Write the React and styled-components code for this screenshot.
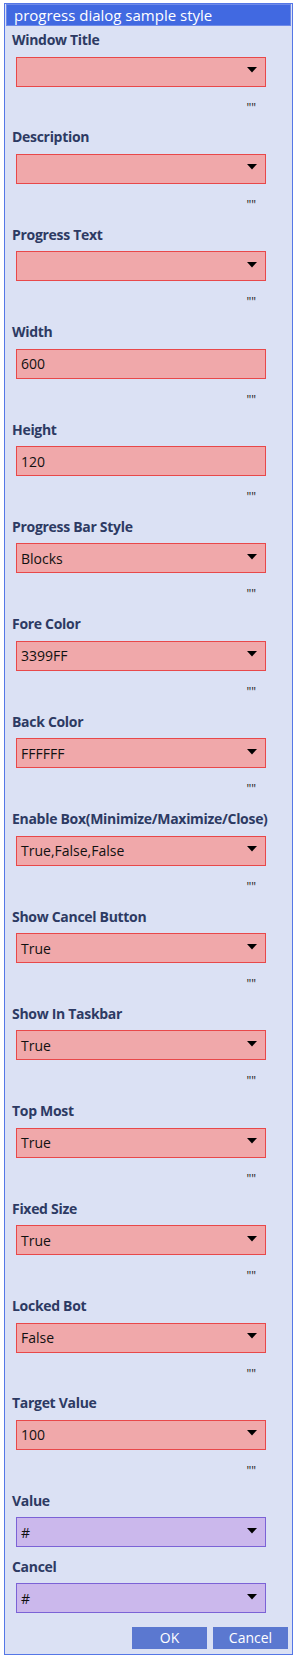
import React from "react";
import styled, { createGlobalStyle } from "styled-components";

const GlobalStyle = createGlobalStyle`
  html, body {
    margin: 0;
    padding: 0;
    background: #fff;
  }
  body {
    font-family: "Open Sans", "Noto Sans", sans-serif;
  }
`;

const Dialog = styled.div`
  margin: 3px 0 0 4px;
  width: 287px;
  border: 1px solid #5577e6;
  background: #dbe1f4;
  display: flex;
  flex-direction: column;
`;

const TitleBar = styled.div`
  margin: 0 1px;
  height: 20px;
  border: 1px solid #6f8ae8;
  background: #4169e1;
  color: #fff;
  font-size: 15px;
  line-height: 20px;
  padding-left: 7px;
  white-space: nowrap;
`;

const Body = styled.div`
  padding: 4px 4px 5px 7px;
  display: flex;
  flex-direction: column;
`;

const Field = styled.div`
  height: ${(p) => (p.$hint ? "97.4px" : "66px")};
  display: flex;
  flex-direction: column;
`;

const Label = styled.div`
  font-size: 14px;
  line-height: 20px;
  font-weight: 700;
  color: #2d3a63;
  white-space: nowrap;
  letter-spacing: -0.3px;
`;

const Select = styled.div`
  margin: 6.5px 0 0 4px;
  width: 250px;
  height: 30px;
  box-sizing: border-box;
  border: 1px solid ${(p) => (p.$kind === "var" ? "#7b62d6" : "#e8484a")};
  background: ${(p) => (p.$kind === "var" ? "#cbb8ec" : "#f0a8aa")};
  display: flex;
  align-items: center;
  padding: 0 8px 0 4px;
  font-size: 14px;
  color: #111;
`;

const Value = styled.span`
  flex: 1;
  white-space: nowrap;
`;

const Arrow = styled.svg`
  width: 10px;
  height: 6px;
  margin-top: -3px;
`;

const Hint = styled.div`
  margin-top: 14px;
  width: 244px;
  text-align: right;
  font-size: 12px;
  line-height: 14px;
  color: #222;
`;

const Buttons = styled.div`
  margin-top: 14px;
  display: flex;
  justify-content: flex-end;
  gap: 6px;
`;

const Button = styled.button`
  width: 75px;
  height: 22px;
  border: none;
  background: #5b78d0;
  color: #fff;
  font-family: "Open Sans", "Noto Sans", sans-serif;
  font-size: 14px;
  line-height: 22px;
  padding: 0;
`;

const fields = [
  ["Window Title", ""],
  ["Description", ""],
  ["Progress Text", ""],
  ["Width", "600", "input"],
  ["Height", "120", "input"],
  ["Progress Bar Style", "Blocks"],
  ["Fore Color", "3399FF"],
  ["Back Color", "FFFFFF"],
  ["Enable Box(Minimize/Maximize/Close)", "True,False,False"],
  ["Show Cancel Button", "True"],
  ["Show In Taskbar", "True"],
  ["Top Most", "True"],
  ["Fixed Size", "True"],
  ["Locked Bot", "False"],
  ["Target Value", "100"],
];

const vars = [
  ["Value", "#"],
  ["Cancel", "#"],
];

const DropArrow = () => (
  <Arrow viewBox="0 0 10 6">
    <path d="M0 0 H10 L5 5.5 Z" fill="#000" />
  </Arrow>
);

const App = () => {
  return (
    <>
      <GlobalStyle />
      <Dialog>
        <TitleBar>progress dialog sample style</TitleBar>
        <Body>
          {fields.map(([label, value, type]) => (
            <Field key={label} $hint>
              <Label>{label}</Label>
              <Select>
                <Value>{value}</Value>
                {type !== "input" && <DropArrow />}
              </Select>
              <Hint>""</Hint>
            </Field>
          ))}
          {vars.map(([label, value], i) => (
            <Field key={label} style={i === vars.length - 1 ? { height: "auto" } : undefined}>
              <Label>{label}</Label>
              <Select $kind="var">
                <Value>{value}</Value>
                <DropArrow />
              </Select>
            </Field>
          ))}
          <Buttons>
            <Button>OK</Button>
            <Button>Cancel</Button>
          </Buttons>
        </Body>
      </Dialog>
    </>
  );
};

export default App;
